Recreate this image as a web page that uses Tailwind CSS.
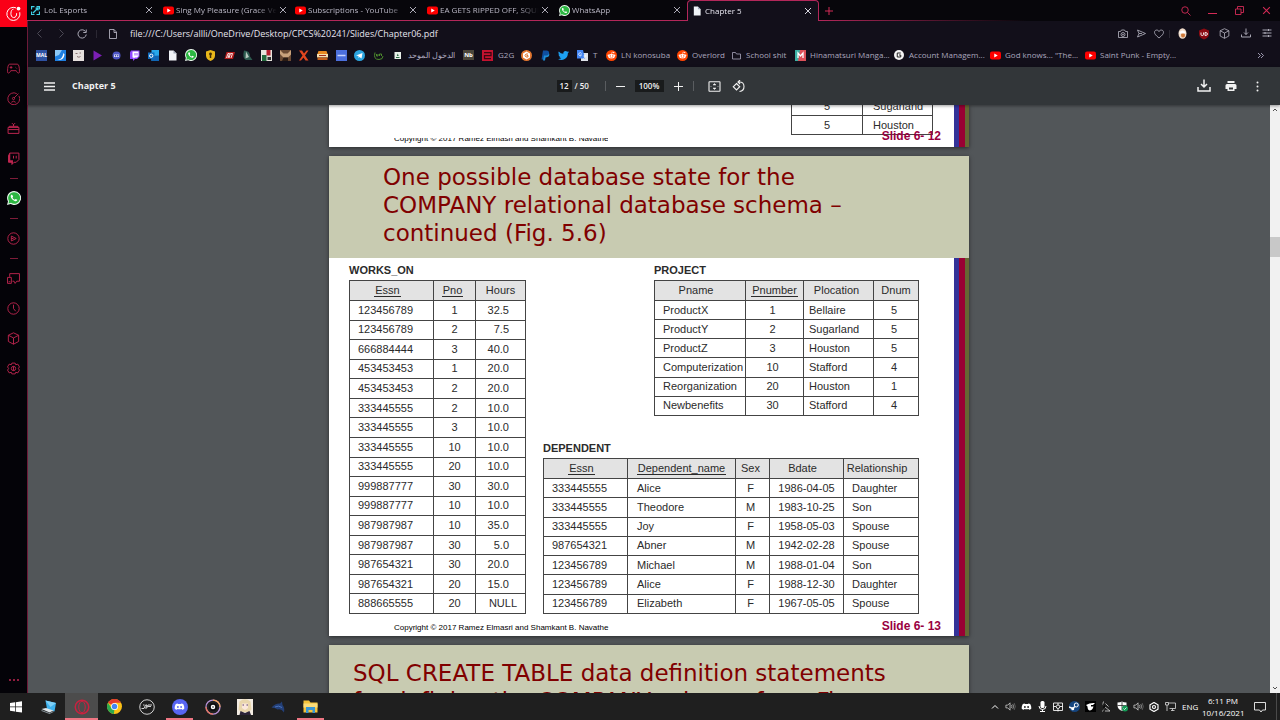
<!DOCTYPE html>
<html lang="en">
  <head>
    <meta charset="UTF-8" />
    <meta name="viewport" content="width=device-width, initial-scale=1.0" />
    <title>Chapter 5</title>
    <script src="https://cdn.jsdelivr.net/npm/@tailwindcss/browser@4"></script>
  </head>
  <body class="h-screen overflow-hidden flex flex-col bg-[#07060b] text-[8px] leading-[12px] text-[#b9b7c4] font-['Open_Sans','Noto_Sans',sans-serif]">
    <!-- shared icons -->
    <svg class="hidden" xmlns="http://www.w3.org/2000/svg">
      <symbol id="yt" viewBox="0 0 22 22">
        <rect x="0" y="3" width="22" height="16" rx="4" fill="#f00" />
        <path d="M8.500 7l7 4-7 4z" fill="#fff" />
      </symbol>
      <symbol id="close" viewBox="0 0 12 12">
        <path d="M1.500 1.500l9 9M10.500 1.500l-9 9" stroke="currentColor" stroke-width="1.400" fill="none" />
      </symbol>
      <symbol id="wa" viewBox="0 0 24 24">
        <path d="M12 0a12 12 0 0 0-10.300 18L0 24l6.200-1.600A12 12 0 1 0 12 0z" fill="#e9f7ec" />
        <path d="M12 2a10 10 0 0 0-8.500 15.200L2.600 21.400l4.300-1.100A10 10 0 1 0 12 2z" fill="#2cb742" />
        <path d="M8.200 6.500c-.8 0-2 1.200-1.800 2.900.4 3 4.600 7.600 8.200 8.100 1.600.2 3-.9 3.100-2.300l-2.900-1.500-1.400 1.500c-1.900-.7-3.300-2-4.100-3.800l1.200-1.400-1.300-3.300z" fill="#fff" />
      </symbol>
      <symbol id="page" viewBox="0 0 22 22">
        <path d="M4 1h9l6 6v14H4z" fill="#f1f3f8" />
        <path d="M13 1v6h6z" fill="#9fa8b8" />
      </symbol>
      <symbol id="reddit" viewBox="0 0 22 22">
        <circle cx="11" cy="11" r="11" fill="#ff4500" />
        <ellipse cx="11" cy="12.500" rx="6.500" ry="4.500" fill="#fff" />
        <circle cx="4.700" cy="10.500" r="1.600" fill="#fff" />
        <circle cx="17.300" cy="10.500" r="1.600" fill="#fff" />
        <path d="M11 8l1-4 3 .8" stroke="#fff" fill="none" />
        <circle cx="15.500" cy="5" r="1.300" fill="#fff" />
        <circle cx="8.500" cy="11.800" r="1.400" fill="#ff4500" />
        <circle cx="13.500" cy="11.800" r="1.400" fill="#ff4500" />
        <path d="M8.500 14.800q2.500 1.500 5 0" stroke="#ff4500" fill="none" />
      </symbol>
      <symbol id="discord" viewBox="0 0 24 24">
        <path d="M8 5.500C6.500 5.800 5 6.200 4 6.800 2 10 1.300 13.500 1.600 17c1.500 1.200 3 1.900 4.800 2.300l1.100-1.900c3 .9 6 .9 9 0l1.100 1.900c1.800-.4 3.300-1.100 4.800-2.300.3-3.500-.4-7-2.400-10.200-1-.6-2.500-1-4-1.300l-.7 1.300a15 15 0 0 0-6.600 0zM8.500 11a1.900 2 0 1 1 0 4.100 1.900 2 0 0 1 0-4.100zm7 0a1.900 2 0 1 1 0 4.100 1.900 2 0 0 1 0-4.100z" fill="currentColor" fill-rule="evenodd" />
      </symbol>
      <symbol id="box" viewBox="0 0 24 24">
        <path d="M12 1.500l9.500 4.500v11.500L12 22.500l-9.500-5V6zM2.500 6L12 11l9.500-5M12 11v11.500" fill="none" stroke="currentColor" stroke-width="1.700" stroke-linejoin="round" />
      </symbol>
      <symbol id="speaker" viewBox="0 0 24 24">
        <path d="M2 9h4l5-5v16l-5-5H2z" fill="none" stroke="#ddd" stroke-width="1.600" />
        <path d="M14 9q2 3 0 6M17 7q3.500 5 0 10" fill="none" stroke="#ccc" stroke-width="1.500" />
        <path d="M20 4.500q5 7.500 0 15" fill="none" stroke="#777" stroke-width="1.500" />
      </symbol>
      <symbol id="twitch" viewBox="0 0 24 24">
        <path d="M5 2h17v12l-5 5h-4l-4 4v-4H3V7z" fill="none" stroke="currentColor" stroke-width="1.800" />
        <path d="M2 7l4-5v13h5v8l-3-4H2z" fill="currentColor" />
        <path d="M12 7v5M17 7v5" stroke="currentColor" stroke-width="1.800" />
      </symbol>
    </svg>

    <div class="flex-1 min-h-0 flex">
      <!-- side bar -->
      <aside class="w-[27px] shrink-0 flex flex-col items-center bg-[#040308] text-[#c02650]">
        <button class="w-full h-[27px] bg-[#fa0017] flex items-center justify-center" aria-label="Menu">
          <svg class="size-[15px]" viewBox="0 0 24 24" fill="none" stroke="#fff" stroke-width="1.600">
            <path d="M16 3A10.500 10.500 0 1 0 22 10" />
            <path d="M12 5c-5 0-6 13 0 13.500 4 0 5-3 5-7" />
            <circle cx="20" cy="4" r="3" fill="#fff" stroke="none" />
          </svg>
        </button>
        <nav class="w-full flex-1 flex flex-col items-center pt-[26px]">
          <a href="#" class="h-[30px] flex items-center" aria-label="GX Corner">
            <svg class="size-[13px]" viewBox="0 0 24 24" fill="none" stroke="currentColor" stroke-width="1.600"><path d="M5 4h14q4 0 4 14c0 4-4 3-6-2H7c-2 5-6 6-6 2Q1 4 5 4zM5 10h5M7.500 7.500v5M16 9v1M18 11v1" /></svg>
          </a>
          <a href="#" class="h-[30px] flex items-center" aria-label="GX Control">
            <svg class="size-[13px]" viewBox="0 0 24 24" fill="none" stroke="currentColor" stroke-width="1.600"><path d="M18 3A11 11 0 1 0 22 7M21 3l-8 8M8 19q4-4 8 0" /><circle cx="12" cy="12" r="2" /></svg>
          </a>
          <a href="#" class="h-[30px] flex items-center" aria-label="GX Cleaner">
            <svg class="size-[13px]" viewBox="0 0 24 24" fill="none" stroke="currentColor" stroke-width="1.800"><path d="M2 10h20v11H2zM4 10V8h16v2M12 8V4M9 2l3 3 3-3M2 14h20" /></svg>
          </a>
          <a href="#" class="h-[30px] flex items-center" aria-label="Twitch">
            <svg class="size-[13px]"><use href="#twitch" /></svg>
          </a>
          <div class="h-[10px] flex items-center"><div class="w-2 h-px bg-[#7e1c38]"></div></div>
          <a href="#" class="h-[30px] flex items-center" aria-label="WhatsApp">
            <svg class="size-[14px]"><use href="#wa" /></svg>
          </a>
          <div class="h-[10px] flex items-center"><div class="w-2 h-px bg-[#7e1c38]"></div></div>
          <a href="#" class="h-[30px] flex items-center" aria-label="Player">
            <svg class="size-[13px]" viewBox="0 0 24 24" fill="none" stroke="currentColor" stroke-width="1.700"><circle cx="12" cy="12" r="10.500" /><path d="M8 7.500v9l9-4.500zM8 12h4" /></svg>
          </a>
          <div class="h-[10px] flex items-center"><div class="w-2 h-px bg-[#7e1c38]"></div></div>
          <a href="#" class="h-[30px] flex items-center" aria-label="My Flow">
            <svg class="size-[13px]" viewBox="0 0 24 24" fill="none" stroke="currentColor" stroke-width="1.700"><path d="M5 9V3h18v14h-5l-3 4-2-4h-3M1 10h7v11H1zM3 18h3" /></svg>
          </a>
          <a href="#" class="h-[30px] flex items-center" aria-label="History">
            <svg class="size-[13px]" viewBox="0 0 24 24" fill="none" stroke="currentColor" stroke-width="1.700"><circle cx="12" cy="12" r="10.500" /><path d="M12 5v7l4 5" /></svg>
          </a>
          <a href="#" class="h-[30px] flex items-center" aria-label="Extensions">
            <svg class="size-[13px]"><use href="#box" /></svg>
          </a>
          <a href="#" class="h-[30px] flex items-center" aria-label="Settings">
            <svg class="size-[13px]" viewBox="0 0 24 24" fill="none" stroke="currentColor" stroke-width="1.700"><path d="M9 2h6l1 3 4-1 3 5-2 3 2 3-3 5-4-1-1 3H9l-1-3-4 1-3-5 2-3-2-3 3-5 4 1z" /><circle cx="12" cy="12" r="4" /><path d="M12 8v8" /></svg>
          </a>
          <button class="mt-auto h-[26px] flex items-center gap-[2px]" aria-label="More">
            <span class="size-[2px] rounded-full bg-[#c02650]"></span>
            <span class="size-[2px] rounded-full bg-[#c02650]"></span>
            <span class="size-[2px] rounded-full bg-[#c02650]"></span>
          </button>
        </nav>
      </aside>

      <main class="flex-1 min-w-0 flex flex-col">
        <!-- tabs -->
        <div class="h-[21px] flex shrink-0">
          <div id="tabs" class="flex"></div>
          <div class="flex-1 flex items-center bg-[linear-gradient(90deg,#b3275a,transparent_45%)] bg-[length:100%_1px] bg-bottom bg-no-repeat">
            <button class="w-5 flex justify-center text-[#d42a56]" aria-label="New tab">
              <svg class="size-[8px]" viewBox="0 0 8 8"><path d="M4 0v8M0 4h8" stroke="currentColor" /></svg>
            </button>
            <div class="ml-auto flex text-[#d42a56]">
              <button class="w-[27px] flex justify-center" aria-label="Search tabs"><svg class="size-[10px]" viewBox="0 0 20 20" fill="none" stroke="currentColor" stroke-width="1.800"><circle cx="8" cy="8" r="6.500" /><path d="M13 13l6 6" /></svg></button>
              <button class="w-[27px] flex justify-center" aria-label="Minimize"><svg class="size-[9px]" viewBox="0 0 9 9"><path d="M0 7.500h9" stroke="currentColor" /></svg></button>
              <button class="w-[27px] flex justify-center" aria-label="Restore"><svg class="size-[9px]" viewBox="0 0 18 18" fill="none" stroke="currentColor" stroke-width="1.800"><path d="M1 6h11v11H1zM5 6V1h12v12h-5" /></svg></button>
              <button class="w-[27px] flex justify-center" aria-label="Close window"><svg class="size-[9px]"><use href="#close" /></svg></button>
            </div>
          </div>
        </div>

        <div class="shrink-0 bg-[#120f1a] border-l border-[#6d1a38]">
          <!-- address bar -->
          <div class="h-[25px] flex items-center">
            <button class="w-[22px] flex justify-center text-[#4c4955]" aria-label="Back"><svg class="size-[9px]" viewBox="0 0 9 9" fill="none" stroke="currentColor"><path d="M6.500 0.500l-4 4 4 4" /></svg></button>
            <button class="w-[22px] flex justify-center text-[#4c4955]" aria-label="Forward"><svg class="size-[9px]" viewBox="0 0 9 9" fill="none" stroke="currentColor"><path d="M2.500 0.500l4 4-4 4" /></svg></button>
            <button class="w-[20px] flex justify-center text-[#b9b7c4]" aria-label="Reload"><svg class="size-[10px]" viewBox="0 0 20 20" fill="none" stroke="currentColor" stroke-width="1.800"><path d="M17 5A8.300 8.300 0 1 0 18.500 11M18.500 1v6h-6" /></svg></button>
            <div class="w-px h-2 bg-[#2b2833] mx-1"></div>
            <svg class="size-[10px] ml-[7px] mr-3" viewBox="0 0 20 20" fill="none" stroke="#b9b7c4" stroke-width="1.700"><path d="M3 1h9l5 5v13H3zM12 1v6h5" /></svg>
            <input class="flex-1 text-[9px] text-[#e6e4ee] bg-transparent outline-none" aria-label="Address" value="file:///C:/Users/allli/OneDrive/Desktop/CPCS%20241/Slides/Chapter06.pdf" />
            <button class="w-[18px] flex justify-center" aria-label="Snapshot"><svg class="size-[10px]" viewBox="0 0 20 20" fill="none" stroke="currentColor" stroke-width="1.600"><path d="M1 5h4l2-3h6l2 3h4v12H1z" /><circle cx="10" cy="11" r="4" /><circle cx="10" cy="11" r="1" /></svg></button>
            <button class="w-[18px] flex justify-center" aria-label="Send"><svg class="size-[9px]" viewBox="0 0 18 18" fill="none" stroke="currentColor" stroke-width="1.600"><path d="M1 2l16 7-16 7 3-7zM4 9h6" /></svg></button>
            <button class="w-[17px] flex justify-center" aria-label="Bookmark"><svg class="size-[10px]" viewBox="0 0 20 20" fill="none" stroke="currentColor" stroke-width="1.600"><path d="M10 18C4 13 1 10 1 6.500 1 1.500 8 0.500 10 5c2-4.500 9-3.500 9 1.500 0 3.500-3 6.500-9 11.500z" /></svg></button>
            <div class="w-px h-2 bg-[#2b2833] mx-[2px]"></div>
            <div class="flex pr-[3px]">
              <button class="w-[21px] flex justify-center" aria-label="Extension"><svg class="size-[11px]" viewBox="0 0 22 22"><ellipse cx="11" cy="11" rx="8" ry="10.500" fill="#f0dccb" /><ellipse cx="12" cy="14" rx="4" ry="5" fill="#d07a3a" /><path d="M5 8q6-6 12 0v3H5z" fill="#fff" /></svg></button>
              <button class="w-[21px] flex justify-center" aria-label="uBlock"><svg class="size-[12px]" viewBox="0 0 24 24"><path d="M12 1l10 4v7q0 7-10 11Q2 19 2 12V5z" fill="#8b0b12" /><path d="M6 9v4q0 2 2.500 2t2.500-2V9M14 9v6q5 0 5-3t-5-3z" fill="none" stroke="#fff" stroke-width="1.800" /></svg></button>
              <button class="w-[21px] flex justify-center" aria-label="Extensions"><svg class="size-[11px]"><use href="#box" /></svg></button>
              <button class="w-[21px] flex justify-center" aria-label="Downloads"><svg class="size-[10px]" viewBox="0 0 20 20" fill="none" stroke="currentColor" stroke-width="1.800"><path d="M10 1v12M6 9l4 4 4-4M1 13v5h18v-5" /></svg></button>
              <button class="w-[21px] flex justify-center" aria-label="Easy setup"><svg class="size-[10px]" viewBox="0 0 20 20" fill="none" stroke="currentColor" stroke-width="1.800"><path d="M1 4h18M1 10h18M1 16h18M13 2v4M6 8v4M13 14v4" /></svg></button>
            </div>
          </div>

          <!-- bookmarks -->
          <div class="h-[21px] pb-[3px] pl-2 flex items-center text-[#aaa6bd]">
            <div class="w-[367px] shrink-0 flex items-center justify-between">
              <a href="#" class="w-[11px] h-[11px] bg-[#2e51a2] text-white text-[5px] leading-[11px] font-bold text-center" aria-label="MyAnimeList">MAL</a>
              <svg class="size-[11px]" viewBox="0 0 22 22"><rect width="22" height="22" fill="#1f7fe0" /><path d="M0 0h14l-6 10-8 3z" fill="#8cc7f5" /><path d="M4 19q10 2 13-13l2 3q-2 14-15 10z" fill="#fff" /></svg>
              <svg class="size-[11px]" viewBox="0 0 22 22"><rect width="22" height="22" fill="#e6e0de" /><path d="M5 7h4M13 6h3M8 13q4 3 7 0" stroke="#8a7474" stroke-width="2" fill="none" /></svg>
              <svg class="size-[11px]" viewBox="0 0 22 22"><path d="M3 1l17 10L3 21z" fill="#7b1fb5" /></svg>
              <svg class="size-[11px]" viewBox="0 0 22 22"><circle cx="11" cy="11" r="8" fill="#4d55c4" /><path d="M6 9h10v5H6z" fill="#dfe0fa" /><circle cx="9" cy="11.500" r="1.500" fill="#303694" /><circle cx="13.500" cy="11.500" r="1.500" fill="#303694" /></svg>
              <svg class="size-[11px]" viewBox="0 0 22 22"><path d="M4 1h17v12l-5 5h-4l-4 4v-4H2V5z" fill="#9146ff" /><path d="M7 3h12v9l-3 3h-4l-3 2v-2H7z" fill="#fff" /><path d="M12 6v5M16 6v5" stroke="#9146ff" stroke-width="2" /></svg>
              <svg class="size-[11px]" viewBox="0 0 22 22"><rect x="7" width="15" height="22" fill="#28a8ea" /><path d="M7 12l15-1v11H7z" fill="#1066b5" /><rect y="5" width="13" height="13" fill="#0f6cbd" /><circle cx="6.500" cy="11.500" r="3.300" fill="none" stroke="#fff" stroke-width="2" /></svg>
              <svg class="size-[11px]"><use href="#page" /></svg>
              <svg class="size-[12px]"><use href="#wa" /></svg>
              <svg class="size-[11px]" viewBox="0 0 22 22"><path d="M11 0l9 3v8q0 7-9 11-9-4-9-11V3z" fill="#e8b61a" /><path d="M11 5a3 3 0 0 1 1.500 5.500V16h-3v-5.500A3 3 0 0 1 11 5z" fill="#3c2a05" /></svg>
              <svg class="size-[11px]" viewBox="0 0 22 22"><path d="M5 4h17l-4 14H1z" fill="#b21c1c" /><path d="M5 16l3-9h3l-3 9M10 16l3-9h4l-3 9" stroke="#fff" stroke-width="1.700" fill="none" /></svg>
              <svg class="size-[11px]" viewBox="0 0 22 22"><path d="M4 1q12 0 12 12l5 7H8Q0 16 4 1z" fill="#2d5b4f" /><path d="M8 3l6 11-7 3z" fill="#b8c9bf" /></svg>
              <svg class="size-[11px]" viewBox="0 0 22 22"><rect width="22" height="22" fill="#e7e4dc" /><path d="M11 0h8v11h-8z" fill="#b51f2e" /><path d="M2 10h9v12H2z" fill="#226b3d" /><path d="M13 14h7v6h-7z" fill="#333" /></svg>
              <svg class="size-[11px]" viewBox="0 0 22 22"><rect width="22" height="22" fill="#6b4a33" /><path d="M0 0l7 7h8l7-7v9l-6 6H7L0 8z" fill="#c9a27c" /><path d="M7 15h9v7H4z" fill="#2a1b14" /></svg>
              <svg class="size-[11px]" viewBox="0 0 22 22"><path d="M2 1h6l4 6 5-6h4l-7 10 7 10h-6l-4-6-5 6H2l7-10z" fill="#e2461f" /></svg>
              <svg class="size-[11px]" viewBox="0 0 22 22"><path d="M3 2h16l3 8H0z" fill="#e88b22" /><rect y="8" width="22" height="7" fill="#f6e0b0" /><path d="M1 15h20v5H1z" fill="#c4601b" /><path d="M4 11h14" stroke="#a02b1a" stroke-width="2" /></svg>
              <svg class="size-[11px]" viewBox="0 0 22 22"><rect width="22" height="22" fill="#4b6fdc" /><path d="M3 11h16" stroke="#c7d4ff" stroke-width="3" /></svg>
              <svg class="size-[11px]" viewBox="0 0 22 22"><circle cx="11" cy="11" r="11" fill="#2ca5e0" /><path d="M4 11l13-5-2 11-4-3-2 2v-4z" fill="#fff" /></svg>
              <svg class="size-[11px]" viewBox="0 0 22 22" fill="none" stroke="#4c8a2c" stroke-width="2"><path d="M4 5q-4 14 8 14 8 0 8-7" /><path d="M7 8v4h3V8M13 12V8h4v4" /></svg>
              <svg class="size-[11px]" viewBox="0 0 22 22"><rect x="5" y="4" width="13" height="14" fill="#e9f0ea" /><path d="M11.500 7l2 5h-4zM8 14h7v2H8z" fill="#2a6b43" /></svg>
            </div>
            <a href="#" class="w-[60px] shrink-0 pl-[5px] whitespace-nowrap">الدخول الموحد</a>
            <a href="#" class="w-[19px] shrink-0" aria-label="Nb"><span class="block w-[11px] h-[10px] bg-[#4a463a] text-white text-[6px] leading-[10px] font-bold text-center">Nb</span></a>
            <a href="#" class="w-[39px] shrink-0 flex items-center gap-[5px]"><svg class="size-[11px]" viewBox="0 0 22 22"><rect width="22" height="22" fill="#c4122f" /><path d="M4 5h14v6H5v6h13" fill="none" stroke="#3a0610" stroke-width="2.500" /></svg>G2G</a>
            <a href="#" class="w-[19px] shrink-0" aria-label="Gamer"><svg class="size-[11px]" viewBox="0 0 22 22"><circle cx="11" cy="11" r="11" fill="#e2762f" /><path d="M11 3l7 4v8l-7 4-7-4V7z" fill="#fff" /><path d="M14 8h-4l-2 3 2 3h4v-3h-3" fill="none" stroke="#e2762f" stroke-width="2" /></svg></a>
            <a href="#" class="w-[18px] shrink-0" aria-label="PayPal"><svg class="size-[11px]" viewBox="0 0 22 22"><path d="M6 1h8q5 1 4 6-1 5-7 5H9l-1 7H3z" fill="#0f4fa0" /><path d="M18 6q3 8-7 9l-1 6H6l2-10h4q5 0 6-5z" fill="#1d8fd8" /></svg></a>
            <a href="#" class="w-[19px] shrink-0" aria-label="Twitter"><svg class="size-[11px]" viewBox="0 0 24 24"><path d="M24 4.600a10 10 0 0 1-2.800.8 5 5 0 0 0 2.100-2.700 10 10 0 0 1-3.100 1.200 4.900 4.900 0 0 0-8.400 4.500A14 14 0 0 1 1.700 3.200a4.900 4.900 0 0 0 1.500 6.500 5 5 0 0 1-2.200-.6 4.900 4.900 0 0 0 3.900 4.900 5 5 0 0 1-2.200.1 4.900 4.900 0 0 0 4.600 3.400A10 10 0 0 1 0 19.500 14 14 0 0 0 21.500 7.100 10 10 0 0 0 24 4.600z" fill="#1da1f2" /></svg></a>
            <a href="#" class="w-[29px] shrink-0 flex items-center gap-[5px]"><svg class="size-[11px]" viewBox="0 0 22 22"><rect x="8" y="6" width="14" height="16" fill="#dfe3ea" /><path d="M0 0h12l4 17H0z" fill="#4285f4" /><path d="M9 7a3 3 0 1 0 0 3H6.500M13 12h6M16 10v2q-1 4-3 5" fill="none" stroke="#fff" stroke-width="1.500" /></svg>T</a>
            <a href="#" class="w-[71px] shrink-0 flex items-center gap-1"><svg class="size-[11px]"><use href="#reddit" /></svg>LN konosuba</a>
            <a href="#" class="w-[55px] shrink-0 flex items-center gap-1"><svg class="size-[11px]"><use href="#reddit" /></svg>Overlord</a>
            <a href="#" class="w-[63px] shrink-0 flex items-center gap-[5px]"><svg class="size-[9px]" viewBox="0 0 18 18" fill="none" stroke="currentColor" stroke-width="1.600"><path d="M1 3h6l2 3h8v10H1z" /></svg>School shit</a>
            <a href="#" class="w-[99px] shrink-0 flex items-center gap-1"><svg class="size-[11px]" viewBox="0 0 22 22"><rect width="22" height="22" fill="#dd5159" /><path d="M0 0h10L6 22H0z" fill="#3cb1a4" /><path d="M6 16V6l5 6 5-6v10" fill="none" stroke="#fff" stroke-width="2.600" /></svg>Hinamatsuri Manga...</a>
            <a href="#" class="w-[96px] shrink-0 flex items-center gap-[5px]"><svg class="size-[10px]" viewBox="0 0 20 20"><circle cx="10" cy="10" r="10" fill="#f4f4f4" /><path d="M13.500 6h-7v8h7v-4H10" fill="none" stroke="#222" stroke-width="2" /></svg>Account Managem...</a>
            <a href="#" class="w-[95px] shrink-0 flex items-center gap-1"><svg class="size-[11px]"><use href="#yt" /></svg>God knows... "The...</a>
            <a href="#" class="shrink-0 flex items-center gap-1"><svg class="size-[11px]"><use href="#yt" /></svg>Saint Punk - Empty...</a>
            <button class="ml-auto mr-4" aria-label="More bookmarks"><svg class="size-[7px]" viewBox="0 0 14 14" fill="none" stroke="currentColor" stroke-width="1.800"><path d="M2 2l5 5-5 5M8 2l5 5-5 5" /></svg></button>
          </div>
        </div>

        <!-- pdf toolbar -->
        <div class="z-10 shrink-0 h-[38px] flex items-center bg-[#323639] text-[#f1f1f1] font-semibold shadow-[0_1px_3px_rgba(0,0,0,0.4)] border-l border-[#6d1a38]">
          <div class="flex-1 flex items-center pl-4">
            <button aria-label="Sidebar"><svg class="size-[11px]" viewBox="0 0 22 22"><path d="M0 4h22M0 11h22M0 18h22" stroke="#f1f1f1" stroke-width="2.800" /></svg></button>
            <h1 class="ml-[17px] text-[9px] font-bold">Chapter 5</h1>
          </div>
          <div class="flex items-center mr-[14px]">
            <input class="w-[15px] h-3 bg-[#191b1c] text-center outline-none" aria-label="Page" value="12" />
            <span class="ml-[3px] w-[30px]">/ 50</span>
            <div class="w-px h-[10px] bg-[#5a5d60]"></div>
            <button class="w-[29px] flex justify-center" aria-label="Zoom out"><svg class="size-[9px]" viewBox="0 0 9 9"><path d="M0 4.500h9" stroke="#f1f1f1" /></svg></button>
            <input class="w-[29px] h-3 bg-[#191b1c] text-center outline-none" aria-label="Zoom" value="100%" />
            <button class="w-[29px] flex justify-center" aria-label="Zoom in"><svg class="size-[9px]" viewBox="0 0 9 9"><path d="M0 4.500h9M4.500 0v9" stroke="#f1f1f1" /></svg></button>
            <div class="w-px h-[10px] bg-[#5a5d60]"></div>
            <button class="ml-[14px]" aria-label="Fit to page"><svg class="size-[13px]" viewBox="0 0 26 26" fill="none" stroke="#f1f1f1" stroke-width="2.200"><rect x="2" y="3.500" width="22" height="19" rx="1" /><path d="M10 10l3-3 3 3zM10 16l3 3 3-3zM6 12v2M20 12v2" fill="#f1f1f1" stroke-width="1" /></svg></button>
            <button class="ml-[11px]" aria-label="Rotate"><svg class="size-[13px]" viewBox="0 0 26 26" fill="none" stroke="#f1f1f1" stroke-width="2.200"><path d="M9 7l6.500 6.500L9 20l-6.500-6.500zM13 4q11-1 11 9 0 9-9 10M16 0l-4 4 4 4" /></svg></button>
          </div>
          <div class="flex-1 flex items-center justify-end pr-[9px]">
            <button class="w-[27px] flex justify-center" aria-label="Download"><svg class="size-[14px]" viewBox="0 0 28 28" fill="none" stroke="#f1f1f1" stroke-width="3"><path d="M14 1v14M8 10l6 6 6-6M2 16v8h24v-8" /></svg></button>
            <button class="w-[27px] flex justify-center" aria-label="Print"><svg class="size-[12px]" viewBox="0 0 24 24"><path d="M5 2h14v4H5zM4 8h16q3 0 3 3v7h-4v4H5v-4H1v-7q0-3 3-3zm4 7v4h8v-4z" fill="#f1f1f1" fill-rule="evenodd" /></svg></button>
            <button class="w-[27px] flex justify-center" aria-label="More actions"><svg class="size-[11px]" viewBox="0 0 22 22" fill="#f1f1f1"><circle cx="11" cy="3" r="2" /><circle cx="11" cy="11" r="2" /><circle cx="11" cy="19" r="2" /></svg></button>
          </div>
        </div>

        <!-- pages -->
        <div class="flex-1 min-h-0 flex bg-[#525659] border-l border-[#6d1a38]">
          <div class="flex-1 overflow-hidden flex flex-col items-center gap-[9px] font-['Liberation_Sans',sans-serif] text-[11px] text-[#2b2b2b]">
            <section class="relative w-[640px] h-[42px] shrink-0 bg-white flex justify-between overflow-hidden shadow-[0_1px_4px_rgba(0,0,0,0.5)]">
              <p class="self-end ml-[65px] mb-[3px] h-[6px] flex items-end overflow-hidden text-[8px] leading-[10px] text-black">Copyright © 2017 Ramez Elmasri and Shamkant B. Navathe</p>
              <div class="flex">
                <table class="w-[142px] h-[38px] mr-[21px] -mt-[9px] table-fixed border-collapse">
                  <tbody>
                    <tr class="h-[19px]"><td class="w-[71px] border border-[#444] text-center">5</td><td class="border border-[#444] pl-[10px]">Sugarland</td></tr>
                    <tr class="h-[19px]"><td class="border border-[#444] text-center">5</td><td class="border border-[#444] pl-[10px]">Houston</td></tr>
                  </tbody>
                </table>
                <div class="w-[5px] bg-[#333399]"></div>
                <div class="w-[6px] bg-[#990033]"></div>
                <div class="w-1 bg-[#666633]"></div>
              </div>
              <p class="absolute right-7 bottom-1 text-[12px] leading-[14px] font-bold text-[#99003f]">Slide 6- 12</p>
            </section>

            <section class="w-[640px] h-[480px] shrink-0 bg-white flex flex-col shadow-[0_1px_4px_rgba(0,0,0,0.5)]">
              <h2 class="h-[102px] shrink-0 pt-[7px] pl-[54px] pr-20 bg-[#c8cbb1] text-[#800000] text-[23px] leading-[28px] font-['DejaVu_Sans',sans-serif]">One possible database state for the COMPANY relational database schema – continued (Fig. 5.6)</h2>
              <div class="flex-1 min-h-0 flex">
                <div class="flex-1 pl-5 pr-[35px] pt-[6px] flex flex-col">
                  <div class="flex justify-between">
                    <div id="works_on"></div>
                    <div class="flex flex-col justify-between">
                      <div id="project" class="self-end"></div>
                      <div id="dependent"></div>
                    </div>
                  </div>
                  <div class="flex justify-between items-center mt-[5px] -mr-[22px] pl-[45px]">
                    <p class="text-[8px] leading-[10px] text-black pt-1">Copyright © 2017 Ramez Elmasri and Shamkant B. Navathe</p>
                    <p class="text-[12px] leading-[14px] font-bold text-[#99003f]">Slide 6- 13</p>
                  </div>
                </div>
                <div class="w-[5px] shrink-0 bg-[#333399]"></div>
                <div class="w-[6px] shrink-0 bg-[#990033]"></div>
                <div class="w-1 shrink-0 bg-[#666633]"></div>
              </div>
            </section>

            <section class="w-[640px] h-[480px] shrink-0 bg-white shadow-[0_1px_4px_rgba(0,0,0,0.5)]">
              <h2 class="h-[102px] pt-[14px] pl-6 pr-16 bg-[#c8cbb1] text-[#800000] text-[23px] leading-[28px] font-['DejaVu_Sans',sans-serif]">SQL CREATE TABLE data definition statements for defining the COMPANY schema from Fig.</h2>
            </section>
          </div>
          <!-- scroll bar -->
          <div class="w-[10px] shrink-0 bg-[#f1f1f1] flex flex-col items-center text-[#505050]">
            <svg class="size-[6px] mt-[2px]" viewBox="0 0 6 6" fill="none" stroke="currentColor"><path d="M1 4l2-2 2 2" /></svg>
            <div class="w-full h-5 mt-[124px] bg-[#c8c8c8]"></div>
            <svg class="size-[6px] mt-auto mb-[2px]" viewBox="0 0 6 6" fill="none" stroke="currentColor"><path d="M1 2l2 2 2-2" /></svg>
          </div>
        </div>
      </main>
    </div>

    <!-- taskbar -->
    <footer class="h-[27px] shrink-0 bg-[#1f1f1f] flex text-white">
      <div class="w-[327px] grid grid-cols-10">
        <button class="flex items-center justify-center" aria-label="Start"><svg class="size-[12px]" viewBox="0 0 24 24" fill="#fff"><path d="M0 4l10-1.500V11H0zM11.500 2.300L24 .5V11H11.500zM0 12.500h10V21L0 19.700zM11.500 12.500H24V23l-12.500-1.700z" /></svg></button>
        <button class="flex items-center justify-center" aria-label="This PC"><svg class="size-[16px]" viewBox="0 0 32 32"><path d="M9 3l21 5-3 17-15-5z" fill="#3fb2ee" /><path d="M9 3l21 5-11 8z" fill="#7fd0f8" /><path d="M1 20l9-2 15 5-8 4z" fill="#dfe6ea" /><path d="M1 22l16 6 8-4v2l-8 4-16-6z" fill="#8b979e" /></svg></button>
        <button class="flex items-center justify-center bg-[#4c4c4c] border-b-2 border-[#ee7683]" aria-label="Opera GX"><svg class="size-[16px] mt-[2px]" viewBox="0 0 32 32" fill="none" stroke="#c9213f" stroke-width="3"><circle cx="16" cy="16" r="13.500" /><ellipse cx="16" cy="16" rx="6.500" ry="11.500" stroke-width="2" /></svg></button>
        <button class="flex items-center justify-center" aria-label="Chrome"><svg class="size-[15px]" viewBox="0 0 30 30"><circle cx="15" cy="15" r="15" fill="#fbc116" /><path d="M15 15L2 7.500A15 15 0 0 1 28 7.500H15z" fill="#e33b2e" /><path d="M15 15l-1 15A15 15 0 0 1 2 7.500L8.500 18z" fill="#2da94f" /><circle cx="15" cy="15" r="7" fill="#fff" /><circle cx="15" cy="15" r="5.500" fill="#4285f4" /></svg></button>
        <button class="flex items-center justify-center" aria-label="Game"><svg class="size-[16px]" viewBox="0 0 32 32" fill="none" stroke="#e8e8e8" stroke-width="1.800"><circle cx="16" cy="16" r="14.500" /><path d="M5 19h5l3-7h3l-3 7M15 19l3-7h8M18 15h6M8 12h3" /></svg></button>
        <button class="flex items-center justify-center" aria-label="Discord"><span class="self-stretch w-[27px] flex items-center justify-center border-b-2 border-[#ee7683]"><span class="size-4 mt-[2px] rounded-full bg-[#5865f2] flex items-center justify-center"><svg class="size-[11px]"><use href="#discord" /></svg></span></span></button>
        <button class="flex items-center justify-center" aria-label="Music"><svg class="size-[16px]" viewBox="0 0 32 32" fill="none"><circle cx="16" cy="16" r="14" stroke="#b892d8" stroke-width="2.500" /><path d="M16 2a14 14 0 0 1 14 14" stroke="#f3a35b" stroke-width="2.500" /><path d="M2 16a14 14 0 0 0 14 14" stroke="#e8755f" stroke-width="2.500" /><circle cx="16" cy="16" r="8" fill="#0c0c0f" /><circle cx="16" cy="16" r="4.500" fill="#fff" /><circle cx="16" cy="16" r="1.500" fill="#111" /></svg></button>
        <button class="flex items-center justify-center" aria-label="Visual novel"><svg class="size-[16px]" viewBox="0 0 32 32"><rect width="32" height="32" fill="#f3ece2" /><path d="M5 5q11-9 22 0l2 16-6 5H8l-5-5z" fill="#e9d6ac" /><path d="M10 9h12v9l-6 4-6-4z" fill="#fbe7dc" /><path d="M11 12h3M19 12h3" stroke="#5b3d6b" stroke-width="2" /><path d="M7 24l9 4 9-4 3 8H5z" fill="#2c2438" /></svg></button>
        <button class="flex items-center justify-center" aria-label="Bird"><svg class="size-[14px]" viewBox="0 0 28 28"><path d="M1 15q8-9 17-8l4-4 1 7q5 5 3 15-6-9-13-6-3-3-12-4z" fill="#233f77" /><path d="M8 14q7-4 14 1" stroke="#4b74bd" stroke-width="2" fill="none" /></svg></button>
        <button class="flex items-center justify-center" aria-label="File Explorer"><span class="self-stretch w-[27px] flex items-center justify-center border-b-2 border-[#ee7683]"><svg class="size-[15px] mt-[2px]" viewBox="0 0 30 30"><path d="M1 3h11l3 4h14v20H1z" fill="#f5c33b" /><path d="M1 9h28v8H1z" fill="#fbdc7a" /><path d="M6 16h18v12h-5v-6h-8v6H6z" fill="#3a97d3" /></svg></span></button>
      </div>
      <div class="ml-auto flex items-center">
        <button class="w-[15px] flex justify-center" aria-label="Hidden icons"><svg class="size-[8px]" viewBox="0 0 8 8" fill="none" stroke="#fff"><path d="M1 5.500l3-3 3 3" /></svg></button>
        <span class="w-4 flex justify-center"><svg class="size-[11px]"><use href="#speaker" /></svg></span>
        <span class="w-4 flex justify-center"><svg class="size-[11px]"><use href="#discord" /></svg></span>
        <span class="w-4 flex justify-center"><svg class="size-[11px]" viewBox="0 0 22 22"><rect x="7" y="0" width="8" height="14" rx="3" fill="#fff" /><path d="M4 10q0 7 7 7t7-7M11 17v4M6 21h10" stroke="#fff" stroke-width="2" fill="none" /></svg></span>
        <span class="w-4 flex justify-center"><svg class="size-[10px]" viewBox="0 0 20 20" fill="none" stroke="#fff" stroke-width="1.700"><path d="M1 2h18v15H1zM10 2v4M10 13v6M1 9h5M14 9h5" /><circle cx="10" cy="9.500" r="3.500" /></svg></span>
        <span class="w-4 flex justify-center"><svg class="size-[11px]" viewBox="0 0 22 22"><circle cx="11" cy="11" r="11" fill="#15457f" /><circle cx="14.500" cy="8" r="4" fill="none" stroke="#fff" stroke-width="2" /><path d="M0 12l7 3 5-4" stroke="#fff" stroke-width="3" fill="none" /><circle cx="7.500" cy="15.500" r="3" fill="#fff" /></svg></span>
        <span class="w-4 flex justify-center"><svg class="size-[11px]" viewBox="0 0 22 22"><rect width="22" height="22" fill="#000" /><path d="M2 8q8-5 18-4l-4 4h-4v3h5q-2 8-8 8-4-1-4-8z" fill="#fff" /></svg></span>
        <span class="w-4 flex justify-center"><svg class="size-[11px]" viewBox="0 0 22 22" fill="none" stroke="#ccc" stroke-width="1.700"><path d="M5 1q-3 8 3 11l-5 9M8 12l10 8H8M9 5l6 6" /><path d="M4 5l5 6-4 9z" fill="#080808" stroke="none" /></svg></span>
        <span class="w-4 flex justify-center"><svg class="size-[11px]" viewBox="0 0 22 22"><path d="M1 3q6 0 9-2 3 2 9 2v6q0 7-9 11-9-4-9-11z" fill="#fff" /><path d="M10 1v18M1 9h18" stroke="#1f1f1f" stroke-width="1.500" /><circle cx="16" cy="15" r="6" fill="#149a56" /><path d="M13 15l2 2 4-4" stroke="#fff" stroke-width="1.500" fill="none" /></svg></span>
        <span class="w-4 flex justify-center"><svg class="size-[11px]"><use href="#speaker" /></svg></span>
        <span class="w-4 flex justify-center"><svg class="size-[10px]" viewBox="0 0 20 20" fill="none" stroke="#fff" stroke-width="2.400"><path d="M10 1l8 4.500v9L10 19l-8-4.500v-9z" /><circle cx="10" cy="10" r="3" /></svg></span>
        <span class="w-4 flex justify-center"><svg class="size-[11px]" viewBox="0 0 22 22" fill="none" stroke="#ddd" stroke-width="1.600"><path d="M7 4h14v11H9M12 19h7M15 15v4M1 3h6v5H1zM4 8v12" /></svg></span>
        <span class="w-6 pl-1">ENG</span>
        <div class="w-[42px] text-center whitespace-nowrap"><div>6:11 PM</div><div>10/16/2021</div></div>
        <button class="w-8 flex justify-center" aria-label="Notifications"><svg class="size-[12px]" viewBox="0 0 24 24" fill="none" stroke="#fff" stroke-width="1.700"><path d="M1 3h22v15h-6l-3 4-3-4H1z" /></svg></button>
        <div class="w-px h-full bg-[#4a4a4a] mr-[3px]"></div>
      </div>
    </footer>

    <script>
      const tabs = [
        ["LoL Esports", `<svg class="size-[9px]" viewBox="0 0 18 18" fill="none" stroke="#3fd0e6" stroke-width="2.500"><path d="M1 7V1h6M11 1h6v6M17 11v6h-6M7 17H1v-6M4 14L14 4M9 4h5v5" /></svg>`],
        ["Sing My Pleasure (Grace Ve", `<svg class="size-[11px]"><use href="#yt" /></svg>`],
        ["Subscriptions - YouTube", `<svg class="size-[11px]"><use href="#yt" /></svg>`],
        ["EA GETS RIPPED OFF, SQUI", `<svg class="size-[11px]"><use href="#yt" /></svg>`],
        ["WhatsApp", `<svg class="size-[11px]"><use href="#wa" /></svg>`],
        ["Chapter 5", `<svg class="size-[10px]"><use href="#page" /></svg>`],
      ];
      document.getElementById("tabs").innerHTML = tabs
        .map(([title, icon], i) => {
          const state =
            i === tabs.length - 1
              ? "bg-[#120f1a] text-[#e8e6f0] border border-b-0 rounded-t-[4px]"
              : "border-b";
          return `
          <div class="w-[132px] h-[21px] pl-1 pr-[6px] flex items-center gap-[2px] border-[#b3275a] ${state}">
            <span class="w-[11px] shrink-0">${icon}</span>
            <span class="flex-1 whitespace-nowrap mask-r-from-80% mask-r-to-100%">${title}</span>
            <button aria-label="Close tab"><svg class="size-[8px]"><use href="#close" /></svg></button>
          </div>`;
        })
        .join("");

      // cols: [title, width, cell classes, header classes, is key]
      function drawTable(id, name, size, cols, rows) {
        const head = cols
          .map(([title, width, , pad, key]) => {
            const label = key
              ? `<span class="inline-block px-px leading-[12px] border-b border-[#2b2b2b]">${title}</span>`
              : title;
            return `<th class="${width} ${pad} h-5 border border-[#444] bg-[#e3e3e3] font-normal text-center">${label}</th>`;
          })
          .join("");
        const body = rows
          .map((row) => {
            const cells = row.split(" ").map((value, i) => {
              const align = value === "NULL" ? "text-right pr-2" : cols[i][2];
              return `<td class="border border-[#444] ${align}">${value}</td>`;
            });
            return `<tr>${cells.join("")}</tr>`;
          })
          .join("");
        document.getElementById(id).innerHTML = `
          <h3 class="mb-[3px] leading-[13px] font-bold">${name}</h3>
          <table class="${size} table-fixed border-collapse leading-[13px]">
            <thead><tr>${head}</tr></thead>
            <tbody>${body}</tbody>
          </table>`;
      }

      drawTable(
        "works_on",
        "WORKS_ON",
        "w-[176px] h-[334px]",
        [
          ["Essn", "w-[84px]", "pl-2", "pr-2", true],
          ["Pno", "w-[42px]", "text-center", "pr-1", true],
          ["Hours", "w-[50px]", "text-right pr-4", "p-0"],
        ],
        [
          "123456789 1 32.5",
          "123456789 2 7.5",
          "666884444 3 40.0",
          "453453453 1 20.0",
          "453453453 2 20.0",
          "333445555 2 10.0",
          "333445555 3 10.0",
          "333445555 10 10.0",
          "333445555 20 10.0",
          "999887777 30 30.0",
          "999887777 10 10.0",
          "987987987 10 35.0",
          "987987987 30 5.0",
          "987654321 30 20.0",
          "987654321 20 15.0",
          "888665555 20 NULL",
        ]
      );
      drawTable(
        "project",
        "PROJECT",
        "w-[264px] h-[136px]",
        [
          ["Pname", "w-[91px]", "pl-2", "pr-2"],
          ["Pnumber", "w-[58px]", "text-center pr-1", "p-0", true],
          ["Plocation", "w-[70px]", "pl-[5px]", "pr-1"],
          ["Dnum", "w-[45px]", "text-center pr-1", "p-0"],
        ],
        [
          "ProductX 1 Bellaire 5",
          "ProductY 2 Sugarland 5",
          "ProductZ 3 Houston 5",
          "Computerization 10 Stafford 4",
          "Reorganization 20 Houston 1",
          "Newbenefits 30 Stafford 4",
        ]
      );
      drawTable(
        "dependent",
        "DEPENDENT",
        "w-[375px] h-[156px]",
        [
          ["Essn", "w-[84px]", "pl-2", "pr-2", true],
          ["Dependent_name", "w-[108px]", "pl-[9px]", "p-0", true],
          ["Sex", "w-[34px]", "text-center pr-1", "pr-1"],
          ["Bdate", "w-[74px]", "text-center", "pr-2"],
          ["Relationship", "w-[75px]", "pl-2", "pr-2"],
        ],
        [
          "333445555 Alice F 1986-04-05 Daughter",
          "333445555 Theodore M 1983-10-25 Son",
          "333445555 Joy F 1958-05-03 Spouse",
          "987654321 Abner M 1942-02-28 Spouse",
          "123456789 Michael M 1988-01-04 Son",
          "123456789 Alice F 1988-12-30 Daughter",
          "123456789 Elizabeth F 1967-05-05 Spouse",
        ]
      );
    </script>
  </body>
</html>
